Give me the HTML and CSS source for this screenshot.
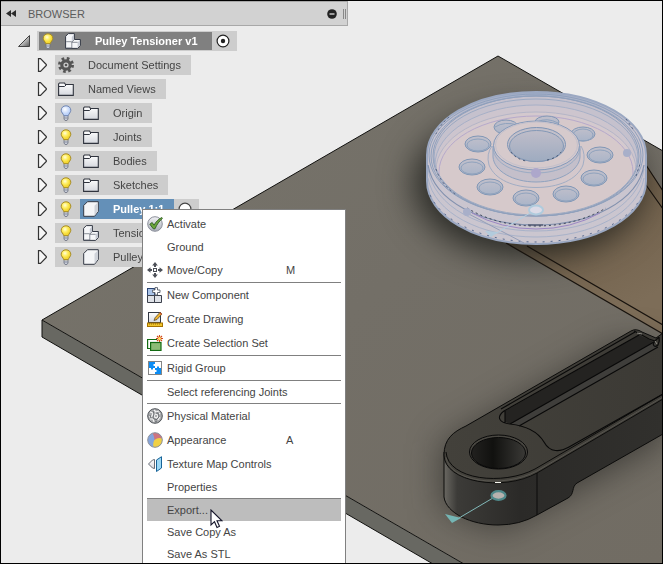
FILE: index.html
```html
<!DOCTYPE html>
<html lang="en">
<head>
<meta charset="utf-8">
<title>Pulley Tensioner v1</title>
<link rel="stylesheet" href="styles.css">
</head>
<body>
<svg class="defs" width="0" height="0" aria-hidden="true">
  <defs>
    <linearGradient id="gTwist" x1="0" y1="0" x2="1" y2="1"><stop offset=".3" stop-color="#eee"/><stop offset="1" stop-color="#555"/></linearGradient>
    <linearGradient id="gPaper" x1="0" y1="0" x2="0" y2="1"><stop offset="0" stop-color="#fff"/><stop offset="1" stop-color="#d5d8de"/></linearGradient>
    <radialGradient id="gOn" cx=".4" cy=".35"><stop offset="0" stop-color="#fffce0"/><stop offset=".5" stop-color="#fff06a"/><stop offset="1" stop-color="#f5d832"/></radialGradient>
    <radialGradient id="gOff" cx=".4" cy=".35"><stop offset="0" stop-color="#fff"/><stop offset="1" stop-color="#bcd2fa"/></radialGradient>
    <linearGradient id="gDisc" x1="0" y1="0" x2="0" y2="1"><stop offset="0" stop-color="#f1f2f5"/><stop offset="1" stop-color="#a9adb8"/></linearGradient>
  </defs>
  <symbol id="arrow" viewBox="0 0 10 14"><path d="M1.500 .700V13.300H3.500L9.300 7.500V6.500L3.500 .700Z" fill="#f6f6f6" stroke="#333" stroke-width="1.200"/></symbol>
  <symbol id="arrow-open" viewBox="0 0 12 12"><path d="M11.500.500V11.500H.500Z" fill="url(#gTwist)" stroke="#444"/></symbol>
  <symbol id="bulb-base" viewBox="0 0 16 16"><path d="M6 10.500H10V14L9 15.500H7L6 14Z" fill="#dde1ee" stroke="#6d7180" stroke-width=".8"/><path d="M6 12.200H10M6 13.800H10" stroke="#777c8c" stroke-width=".7"/></symbol>
  <symbol id="bulb" viewBox="0 0 16 16"><use href="#bulb-base"/><path d="M8 .8C5 .8 3.200 2.900 3.200 5.300C3.200 7.500 5.200 8.500 5.800 10.700H10.200C10.800 8.500 12.800 7.500 12.800 5.300C12.800 2.900 11 .8 8 .8Z" fill="url(#gOn)" stroke="#a68b27"/></symbol>
  <symbol id="bulb-off" viewBox="0 0 16 16"><use href="#bulb-base"/><path d="M8 .8C5 .8 3.200 2.900 3.200 5.300C3.200 7.500 5.200 8.500 5.800 10.700H10.200C10.800 8.500 12.800 7.500 12.800 5.300C12.800 2.900 11 .8 8 .8Z" fill="url(#gOff)" stroke="#6f85b2"/></symbol>
  <symbol id="folder" viewBox="0 0 16 16"><path d="M.6 14.400V3L1.500 2H6.500L7.500 3.500H15.300V14.400Z" fill="url(#gPaper)" stroke="#30343e" stroke-width="1.100"/><path d="M1 5.500H6.500L8 4" fill="none" stroke="#30343e"/></symbol>
  <symbol id="gear" viewBox="0 0 16 16"><g stroke="#555" fill="none"><circle cx="8" cy="8" r="6.500" stroke-width="3" stroke-dasharray="2.600 2.505"/><circle cx="8" cy="8" r="4.200" stroke-width="3.200"/></g><circle cx="8" cy="8" r="1.300" fill="#555"/></symbol>
  <symbol id="cube" viewBox="0 0 16 16"><path d="M.7 4.500L4.500.700H15.300V10.500L11.500 15.300H.700Z" fill="#f4f5f7" stroke="#333844" stroke-linejoin="round"/><path d="M11.500 14.800L14.800 10.500V1.500L11.500 4.700Z" fill="#cfd3da"/></symbol>
  <symbol id="assembly" viewBox="0 0 16 16"><path d="M.6 3.300L3.300.6H9.400V6.500H13L15.400 6.500V12.500L12.600 15.400H.6Z" fill="#f6f7f9" stroke="#333844" stroke-linejoin="round"/><path d="M6.800 4L9 1.500V6.500L6.800 8.500ZM12.600 9.500L15 7V12.300L12.600 14.800Z" fill="#c6cad3"/><path d="M6.800 9.300H12.600M6.800 9.300V15L1.200 15M6.800 9.300L9.400 6.500M1.200 8.700H6.800" fill="none" stroke="#5d6370" stroke-width=".7"/></symbol>
  <symbol id="target" viewBox="0 0 14 14"><circle cx="7" cy="7" r="5.900" fill="#fff" stroke="#222" stroke-width="1.200"/><circle cx="7" cy="7" r="2.200" fill="#222"/></symbol>
  <symbol id="circle" viewBox="0 0 14 14"><circle cx="7" cy="7" r="5.900" fill="#fff" stroke="#444" stroke-width="1.200"/></symbol>
  <symbol id="check" viewBox="0 0 16 16"><circle cx="8" cy="8" r="7.300" fill="url(#gDisc)" stroke="#8b8f9a"/><path d="M2.800 8.200L5.200 6.500L7 9.200C8.800 6 11 3.500 14.800 1.500L15.400 2.500C12.200 5.200 9.800 8.500 8 12.800H6.300Z" fill="#6ba63c" stroke="#2f5e23" stroke-width=".9"/></symbol>
  <symbol id="move" viewBox="0 0 16 16"><path d="M8 0L10.800 3.500H9V5H7V3.500H5.200ZM8 16L5.200 12.500H7V11H9V12.500H10.800ZM0 8L3.500 5.200V7H5V9H3.500V10.800ZM16 8L12.500 10.800V9H11V7H12.500V5.200Z" fill="#4d5058"/><rect x="6.500" y="6.500" width="3" height="3" fill="#fff" stroke="#4d5058"/></symbol>
  <symbol id="newcomp" viewBox="0 0 16 16"><rect x=".5" y="1.500" width="7" height="7" fill="#a9c3e8" stroke="#2a4474"/><path d="M.5 8.500H7.500V15.500H.5ZM7.500 8.500H14.500V15.500H7.500Z" fill="#dfe2e8" stroke="#3c414c"/><path d="M8 .600H10.500V3H13V5.500H10.500V8H8V5.500H5.600V3H8Z" fill="#fff" stroke="#555b68" stroke-width=".9"/></symbol>
  <symbol id="drawing" viewBox="0 0 16 16"><rect x="1.500" y="1.500" width="12" height="10" fill="url(#gPaper)" stroke="#333844"/><rect x=".5" y="12" width="15" height="3.500" fill="#f0c52c" stroke="#a67300"/><path d="M2.500 13.500V12.500M4.500 13.500V12.500M6.500 13.500V12.500M8.500 13.500V12.500M10.500 13.500V12.500M12.500 13.500V12.500" stroke="#704b00" stroke-width=".7"/><path d="M7 9.500L8 6.800L13 1.300L15 3L10 8.500Z" fill="#f1b52e" stroke="#40372b" stroke-width=".7"/><path d="M12.300 2.200L14.200 4L15 3L13 1.300Z" fill="#d3542b"/></symbol>
  <symbol id="selset" viewBox="0 0 16 16"><path d="M3 13.500H.600V4.500H10" fill="none" stroke="#126b12" stroke-width="1.200"/><rect x="3.600" y="7.500" width="10.400" height="8" fill="#8dbc76" stroke="#126b12" stroke-width="1.200"/><path d="M12.500 0V7M9 3.500H16M10 1L15 6M15 1L10 6" stroke="#d14a19" stroke-width="1.100"/><circle cx="12.500" cy="3.500" r="1.500" fill="#ffe36a"/></symbol>
  <symbol id="rigid" viewBox="0 0 16 16"><rect x="1.500" y="1.500" width="13" height="13" fill="#fff" stroke="#858585"/><path d="M2 2H8V4H6.500V6H8V8H10V6.500H12V8H14V14H8V12H9.500V10H8V8H6V9.500H4V8H2Z" fill="#0c8df5"/></symbol>
  <symbol id="material" viewBox="0 0 16 16"><circle cx="8" cy="8" r="7.300" fill="#a9abad" stroke="#4f5358"/><path d="M3 4L6 5L5 8L2 9M7 2L9 4L12 3M8 6L11 7L10 10L7 9ZM3 11L6 11L7 14M11 12L13 9M13 5L12 6" fill="none" stroke="#f4f4f4" stroke-width="1.100"/><path d="M6 3L7 6L6 10L9 12L12 9L11 5L9 5M3 7L4 10M10 13L8 14" fill="none" stroke="#5c6064" stroke-width=".8"/></symbol>
  <symbol id="appear" viewBox="0 0 16 16"><circle cx="8" cy="8" r="7.300" fill="#84a5dc"/><path d="M5.500 1.200A7.300 7.300 0 0 1 15.200 6.500L7.500 8Q7.500 4 5.500 1.200Z" fill="#cd7480"/><path d="M15.200 6.500A7.300 7.300 0 0 1 6.500 15.100Q5.500 11 7.500 8Q11 5 15.200 6.500Z" fill="#f0d045"/><circle cx="8" cy="8" r="7.300" fill="none" stroke="#8e929c"/></symbol>
  <symbol id="texture" viewBox="0 0 16 16"><path d="M7.500 3.500V12.500L5.500 12L1.500 8L5.500 4Z" fill="url(#gPaper)" stroke="#555b66" stroke-width=".9"/><path d="M9.500 15.500V4L14.500 .700V12Z" fill="#9cd8f5" stroke="#176398"/></symbol>
</svg>

<main class="canvas">
  <svg class="scene" viewBox="0 0 663 564" preserveAspectRatio="xMinYMin slice" role="img" aria-label="Model view">
    <defs>
      <linearGradient id="plate" x1="0" y1="0" x2="1" y2="1"><stop offset="0" stop-color="#77746b"/><stop offset=".5" stop-color="#736f67"/><stop offset="1" stop-color="#716c63"/></linearGradient>
      <linearGradient id="brown" x1="0" y1="0" x2=".5" y2="1"><stop offset="0" stop-color="#65543f"/><stop offset="1" stop-color="#7d6d58"/></linearGradient>
      <linearGradient id="armside" x1="444" y1="0" x2="662" y2="0" gradientUnits="userSpaceOnUse"><stop offset="0" stop-color="#6a6862"/><stop offset=".06" stop-color="#3c3b38"/><stop offset=".35" stop-color="#2b2a28"/><stop offset="1" stop-color="#31302d"/></linearGradient>
      <linearGradient id="armtop" x1="0" y1="0" x2="1" y2="0"><stop offset="0" stop-color="#43413b"/><stop offset="1" stop-color="#3c3a35"/></linearGradient>
      <linearGradient id="bore" x1="0" y1="0" x2="1" y2="0"><stop offset="0" stop-color="#22211f"/><stop offset=".4" stop-color="#11110f"/><stop offset="1" stop-color="#3a3936"/></linearGradient>
      <linearGradient id="well" x1="0" y1="0" x2="0" y2="1"><stop offset="0" stop-color="#bfbdc9"/><stop offset="1" stop-color="#9eabc0"/></linearGradient>
      <linearGradient id="hole" x1="0" y1="0" x2="0" y2="1"><stop offset="0" stop-color="#c2c0cb"/><stop offset="1" stop-color="#a9b4c8"/></linearGradient>
      <linearGradient id="rim" x1="0" y1="0" x2="0" y2="1"><stop offset="0" stop-color="#a4afc8"/><stop offset=".25" stop-color="#c9c4cf"/><stop offset="1" stop-color="#cbc6cf"/></linearGradient>
      <filter id="soft" filterUnits="userSpaceOnUse" x="300" y="20" width="440" height="600" color-interpolation-filters="sRGB"><feGaussianBlur stdDeviation="17"/></filter>
      <clipPath id="plateClip"><path d="M42 320L498 56L663 151V564H464Z"/></clipPath>
      <clipPath id="rimClip"><ellipse cx="536" cy="156" rx="102" ry="59"/></clipPath>
    </defs>
    <rect width="663" height="564" fill="#ececec"/>
    <path d="M42 320V337L433 564H464Z" fill="#686862"/>
    <path d="M42 320L498 56L663 151V564H464Z" fill="url(#plate)"/>
    <g clip-path="url(#plateClip)">
      <path d="M506 243L663 334V191L640 155Z" fill="url(#brown)"/>
      <g filter="url(#soft)">
        <ellipse cx="528" cy="184" rx="114" ry="72" fill="#1a1b18" opacity=".85"/>
        <path d="M442 445L620 343L663 350V440L500 530L443 508Z" fill="#1d1d1a" opacity=".6"/>
      </g>
      <path d="M506 243L663 334M527 246L663 325M646 165L663 191M646 185L663 209" fill="none" stroke="#18130e" stroke-width="1.200"/>
    </g>
    <path d="M498 56L663 151M498 56L42 320L464 564M42 320V337L433 564" fill="none" stroke="#11110f"/>

    <path d="M444 452V497C446 513 471 525 498 525Q520 525 537 515L568 498C575 494 571 487 577 483L663 434V394L537 465Z" fill="url(#armside)" stroke="#0c0c0b"/>
    <path d="M444 455C444 439 453 432 466 426L631 331Q636 328 642 332L656 338L663 333V399L537 473C503 492 444 482 444 455Z" fill="url(#armtop)" stroke="#0c0c0b"/>
    <path d="M446 457C449 482 503 489 537 471L663 397" fill="none" stroke="#57554f"/>
    <path d="M446 452C448 480 503 486 535 469L663 394M537 473V515" fill="none" stroke="#0b0b0a"/>
    <path d="M505 411L639 335L654 342L511 424L505 422Z" fill="#242321"/>
    <path d="M511 424L654 342L658 347L519 426Z" fill="#3f3e3b"/>
    <path d="M501 409L635 332M504 411L639 335M510 424L654 342M519 426L658 347M505 411V423M504 411C496 417 499 423 510 424C528 426 538 432 544 442C550 453 560 452 569 447L663 394" fill="none" stroke="#090909" stroke-width="1.100"/>
    <path d="M634 331L640 334L649 339L655 341L659 337M655 341C651 345 655 348 658 345Q660 341 659 337" fill="none" stroke="#0c0c0b" stroke-width="1.300"/>
    <path d="M637 333L642 334M655 341L657 344" stroke="#8d8b84"/>
    <ellipse cx="498.500" cy="452" rx="29" ry="17" fill="#494741" stroke="#090909"/>
    <ellipse cx="498.500" cy="453" rx="27" ry="15.500" fill="url(#bore)" stroke="#090909"/>
    <path d="M495 482.500H501" stroke="#f5f5ee"/>
    <path d="M498 495L459 518" stroke="#82b9b9"/>
    <path d="M445 514L461 518L452 523Z" fill="#75b5b4"/>
    <ellipse cx="498.500" cy="495.500" rx="7" ry="4.300" fill="#b7b2ae" stroke="#4f898a" stroke-width="2.200"/>

    <path d="M427 155C427 120 475 92 536 92S646 120 646 155V181C646 216 597 244 536 244S427 216 427 181Z" fill="url(#rim)" stroke="#9ba8c2" stroke-width="2"/>
    <ellipse cx="536" cy="156" rx="103" ry="60" fill="#c5c1cd" stroke="#8f9fbb"/>
    <g clip-path="url(#rimClip)">
      <ellipse cx="536" cy="165" rx="101" ry="60" fill="#cdc5ce" stroke="#a7b0c7"/>
      <ellipse cx="536" cy="170" rx="100" ry="58" fill="#d4c9ce" stroke="#b4b5c7"/>
      <ellipse cx="536" cy="172" rx="97" ry="56" fill="#d6c9cb" stroke="#b6a9cb"/>
    </g>
    <g fill="none" stroke="#8fa0bc">
      <ellipse cx="536" cy="155" rx="107" ry="61"/>
      <ellipse cx="536" cy="156" rx="105" ry="60"/>
      <ellipse cx="536" cy="157" rx="102" ry="58" stroke="#9ba9c2"/>
      <path d="M428 169C434 207 481 231 536 231S638 207 644 169M428 178C434 213 481 237 536 237S638 213 644 178" stroke="#a8b2c9"/>
      <path d="M428 165C434 201 481 225 536 225S638 201 644 165" stroke="#8291ae" stroke-width="1.200"/>
      <path d="M430 195C443 224 489 242 536 242S630 224 642 195" stroke="#596b91" stroke-dasharray="2 6"/>
      <path d="M467 208Q497 226 536 226T606 208" stroke="#353d54" stroke-dasharray="2 3"/>
      <path d="M528 225H543" stroke="#353d54"/>
      <path d="M472 213Q501 229 536 229T600 213" stroke="#9c87c4"/>
      <path d="M449 117Q440 125 436 134M626 119L633 129M436 169Q441 184 455 194M636 176L640 164" stroke="#53617f" stroke-dasharray="2 3"/>
      <path d="M465 212L524 243" stroke="#949eb8"/>
    </g>
    <g fill="url(#hole)" stroke="#8197b6">
      <ellipse cx="506" cy="127" rx="12" ry="7"/><ellipse cx="547" cy="122" rx="12" ry="6"/><ellipse cx="583" cy="134" rx="12" ry="7"/><ellipse cx="600" cy="155" rx="13" ry="8"/><ellipse cx="594" cy="178" rx="13" ry="8"/><ellipse cx="566" cy="194" rx="13" ry="8"/><ellipse cx="526" cy="198" rx="13" ry="8"/><ellipse cx="490" cy="187" rx="13" ry="8"/><ellipse cx="472" cy="167" rx="13" ry="8"/><ellipse cx="478" cy="144" rx="13" ry="8"/>
    </g>
    <g fill="none" stroke="#8fa2bd">
      <ellipse cx="583" cy="135" rx="10" ry="6"/><ellipse cx="600" cy="156" rx="11" ry="6"/><ellipse cx="594" cy="179" rx="11" ry="6"/><ellipse cx="566" cy="195" rx="11" ry="6"/><ellipse cx="526" cy="199" rx="11" ry="6"/><ellipse cx="490" cy="188" rx="11" ry="6"/><ellipse cx="472" cy="168" rx="11" ry="6"/><ellipse cx="478" cy="145" rx="11" ry="6"/><path d="M495 127Q505 121 517 125M537 122Q547 117 558 123"/>
    </g>
    <path d="M492 146Q486 154 489 165C495 180 514 187.500 536 187.500S577 180 583 165Q586 154 581 146" fill="#d4c8cc" stroke="#a1adc4"/>
    <path d="M493 146V157C494 171 513 182 536 182S579 171 580 157V146Z" fill="#c4bfca" stroke="#8fa2bf"/>
    <path d="M493 149C495 164 514 173 536 173S578 164 580 149" fill="none" stroke="#9aabc4"/>
    <ellipse cx="536.500" cy="145.500" rx="43" ry="24.500" fill="#d4c9cd" stroke="#849abb"/>
    <ellipse cx="536.500" cy="145" rx="41" ry="23" fill="#d6cacc" stroke="#c3c0cb"/>
    <ellipse cx="536.500" cy="144.500" rx="29" ry="17" fill="#c3c0ca" stroke="#7e94b5"/>
    <ellipse cx="536.500" cy="146" rx="27" ry="15.500" fill="url(#well)" stroke="#8398b6"/>
    <path d="M511 152Q516 159 526 161M547 160Q557 158 561 152" fill="none" stroke="#44536e" stroke-dasharray="2 3"/>
    <g fill="#a8afc9"><circle cx="627" cy="153" r="4"/><circle cx="467" cy="212" r="4"/><circle cx="536" cy="173" r="5" fill="#ada7cb"/></g>
    <path d="M530 213L495 234" stroke="#b2cfe0"/><path d="M485 231L498 232L491 237Z" fill="#b2cbdc"/>
    <ellipse cx="536" cy="210" rx="7" ry="4.500" fill="#dcdbe7" stroke="#afcbdd" stroke-width="2"/>
  </svg>

  <section class="browser">
    <header class="bar">
      <button class="collapse" aria-label="Collapse"><svg width="10" height="7" viewBox="0 0 10 7"><path d="M5 0V7L0 3.500ZM10 0V7L5 3.500Z" fill="#2b2b2b"/></svg></button>
      <h1>BROWSER</h1>
      <button class="minimize" aria-label="Minimize"><svg width="10" height="10" viewBox="0 0 10 10"><circle cx="5" cy="5" r="4.800" fill="#222"/><path d="M2.500 5H7.500" stroke="#ddd" stroke-width="1.300"/></svg></button>
      <span class="grip"></span>
    </header>
    <ul class="tree">
      <li class="row root"><button class="twist" aria-label="Close"><svg width="12" height="12"><use href="#arrow-open"/></svg></button><div class="node"><span class="label dark"><svg class="icon"><use href="#bulb"/></svg><svg class="icon"><use href="#assembly"/></svg><span class="name">Pulley Tensioner v1</span></span><svg class="dot"><use href="#target"/></svg></div></li>
      <li class="row"><button class="twist" aria-label="Open"><svg width="10" height="14"><use href="#arrow"/></svg></button><div class="node"><span class="label"><svg class="icon"><use href="#gear"/></svg><span class="name">Document Settings</span></span></div></li>
      <li class="row"><button class="twist" aria-label="Open"><svg width="10" height="14"><use href="#arrow"/></svg></button><div class="node"><span class="label"><svg class="icon"><use href="#folder"/></svg><span class="name">Named Views</span></span></div></li>
      <li class="row"><button class="twist" aria-label="Open"><svg width="10" height="14"><use href="#arrow"/></svg></button><div class="node"><svg class="icon lamp"><use href="#bulb-off"/></svg><span class="label"><svg class="icon"><use href="#folder"/></svg><span class="name">Origin</span></span></div></li>
      <li class="row"><button class="twist" aria-label="Open"><svg width="10" height="14"><use href="#arrow"/></svg></button><div class="node"><svg class="icon lamp"><use href="#bulb"/></svg><span class="label"><svg class="icon"><use href="#folder"/></svg><span class="name">Joints</span></span></div></li>
      <li class="row"><button class="twist" aria-label="Open"><svg width="10" height="14"><use href="#arrow"/></svg></button><div class="node"><svg class="icon lamp"><use href="#bulb"/></svg><span class="label"><svg class="icon"><use href="#folder"/></svg><span class="name">Bodies</span></span></div></li>
      <li class="row"><button class="twist" aria-label="Open"><svg width="10" height="14"><use href="#arrow"/></svg></button><div class="node"><svg class="icon lamp"><use href="#bulb"/></svg><span class="label"><svg class="icon"><use href="#folder"/></svg><span class="name">Sketches</span></span></div></li>
      <li class="row"><button class="twist" aria-label="Open"><svg width="10" height="14"><use href="#arrow"/></svg></button><div class="node"><svg class="icon lamp"><use href="#bulb"/></svg><span class="label selected"><svg class="icon"><use href="#cube"/></svg><span class="name">Pulley 1:1</span></span><svg class="dot"><use href="#circle"/></svg></div></li>
      <li class="row"><button class="twist" aria-label="Open"><svg width="10" height="14"><use href="#arrow"/></svg></button><div class="node"><svg class="icon lamp"><use href="#bulb"/></svg><span class="label"><svg class="icon"><use href="#assembly"/></svg><span class="name">Tensioner</span></span></div></li>
      <li class="row"><button class="twist" aria-label="Open"><svg width="10" height="14"><use href="#arrow"/></svg></button><div class="node"><svg class="icon lamp"><use href="#bulb"/></svg><span class="label"><svg class="icon"><use href="#cube"/></svg><span class="name">Pulley</span></span></div></li>
    </ul>
  </section>

  <div class="menu" role="menu">
    <button class="item tall" role="menuitem"><svg class="icon"><use href="#check"/></svg><span>Activate</span></button>
    <button class="item" role="menuitem"><span>Ground</span></button>
    <button class="item tall" role="menuitem"><svg class="icon"><use href="#move"/></svg><span>Move/Copy</span><kbd>M</kbd></button>
    <hr>
    <button class="item tall" role="menuitem"><svg class="icon"><use href="#newcomp"/></svg><span>New Component</span></button>
    <button class="item tall" role="menuitem"><svg class="icon"><use href="#drawing"/></svg><span>Create Drawing</span></button>
    <button class="item tall" role="menuitem"><svg class="icon"><use href="#selset"/></svg><span>Create Selection Set</span></button>
    <hr>
    <button class="item tall" role="menuitem"><svg class="icon"><use href="#rigid"/></svg><span>Rigid Group</span></button>
    <hr>
    <button class="item" role="menuitem"><span>Select referencing Joints</span></button>
    <hr>
    <button class="item tall" role="menuitem"><svg class="icon"><use href="#material"/></svg><span>Physical Material</span></button>
    <button class="item tall" role="menuitem"><svg class="icon"><use href="#appear"/></svg><span>Appearance</span><kbd>A</kbd></button>
    <button class="item tall" role="menuitem"><svg class="icon"><use href="#texture"/></svg><span>Texture Map Controls</span></button>
    <button class="item" role="menuitem"><span>Properties</span></button>
    <hr>
    <button class="item hover" role="menuitem"><span>Export...</span></button>
    <button class="item" role="menuitem"><span>Save Copy As</span></button>
    <button class="item" role="menuitem"><span>Save As STL</span></button>
  </div>
  <svg class="cursor" width="13" height="20" viewBox="0 0 13 20"><path d="M1 1V16L4.500 12.700L7 18.500L9.500 17.300L7 11.800H12Z" fill="#fff" stroke="#15152a" stroke-width="1.100"/></svg>
</main>
</body>
</html>
```
FILE: styles.css
```css
* { box-sizing: border-box; }

body {
  margin: 0;
  font-family: "Liberation Sans", Arial, sans-serif;
  font-size: 11px;
  line-height: 16px;
  color: #444;
}

button {
  margin: 0;
  padding: 0;
  border: 0;
  background: none;
  font: inherit;
  color: inherit;
  text-align: left;
}

svg { display: block; }

.defs { position: absolute; }

.canvas {
  position: relative;
  height: 100vh;
  overflow: hidden;
  border: 1px solid #000;
  background: #ececec;
}

.scene {
  position: absolute;
  inset: -1px;
  width: calc(100% + 2px);
  height: calc(100% + 2px);
}

.browser { position: relative; }

.bar {
  display: flex;
  align-items: center;
  width: 347px;
  max-width: 100%;
  height: 25px;
  padding: 0 1px 0 5px;
  border: 1px solid #a8a8a8;
  border-left: 0;
  background: #d2d2d2;
}

.bar h1 {
  flex: 1;
  margin: 0;
  padding-left: 12px;
  font-size: 11px;
  font-weight: normal;
  color: #5c5c5c;
}

.minimize { margin-right: 6px; }

.grip {
  width: 3px;
  height: 10px;
  border: solid #888;
  border-width: 0 1px;
}

.tree {
  margin: 0;
  padding: 3px 0 0;
  list-style: none;
}

.row {
  display: flex;
  align-items: center;
  height: 24px;
  padding-left: 36px;
}

.root { padding-left: 17px; }

.twist { width: 18px; }
.root .twist { width: 19px; }

.node {
  display: flex;
  align-items: center;
  height: 20px;
  background: #cdcdcd;
}

.icon {
  flex: none;
  width: 16px;
  height: 16px;
}

.lamp { margin: 0 6px 0 3px; }

.label {
  display: flex;
  align-items: center;
  gap: 9px;
  height: 20px;
  padding: 0 10px 0 3px;
}

.name { padding-left: 5px; }

.dark,
.selected {
  color: #fff;
  font-weight: bold;
}

.dark {
  height: 18px;
  margin-left: 2px;
  padding-left: 1px;
  padding-right: 14px;
  background: #808080;
}

.selected { background: #6490b8; }

.dot {
  width: 14px;
  height: 14px;
  margin: 0 7px 0 4px;
}

.menu {
  position: absolute;
  top: 208px;
  left: 141px;
  width: 204px;
  padding: 2px 4px;
  border: 1px solid #808080;
  background: #fff;
}

.menu hr {
  height: 1px;
  margin: 0;
  border: 0;
  background: #808080;
}

.item {
  display: flex;
  align-items: center;
  position: relative;
  width: 100%;
  height: 22px;
  padding-left: 20px;
}

.tall { height: 24px; }

.item .icon { margin: 0 4px 0 -20px; }

.item kbd {
  position: absolute;
  left: 139px;
  font: inherit;
}

.hover { background: #bdbdbd; }

.cursor {
  position: absolute;
  top: 508px;
  left: 209px;
}
```
